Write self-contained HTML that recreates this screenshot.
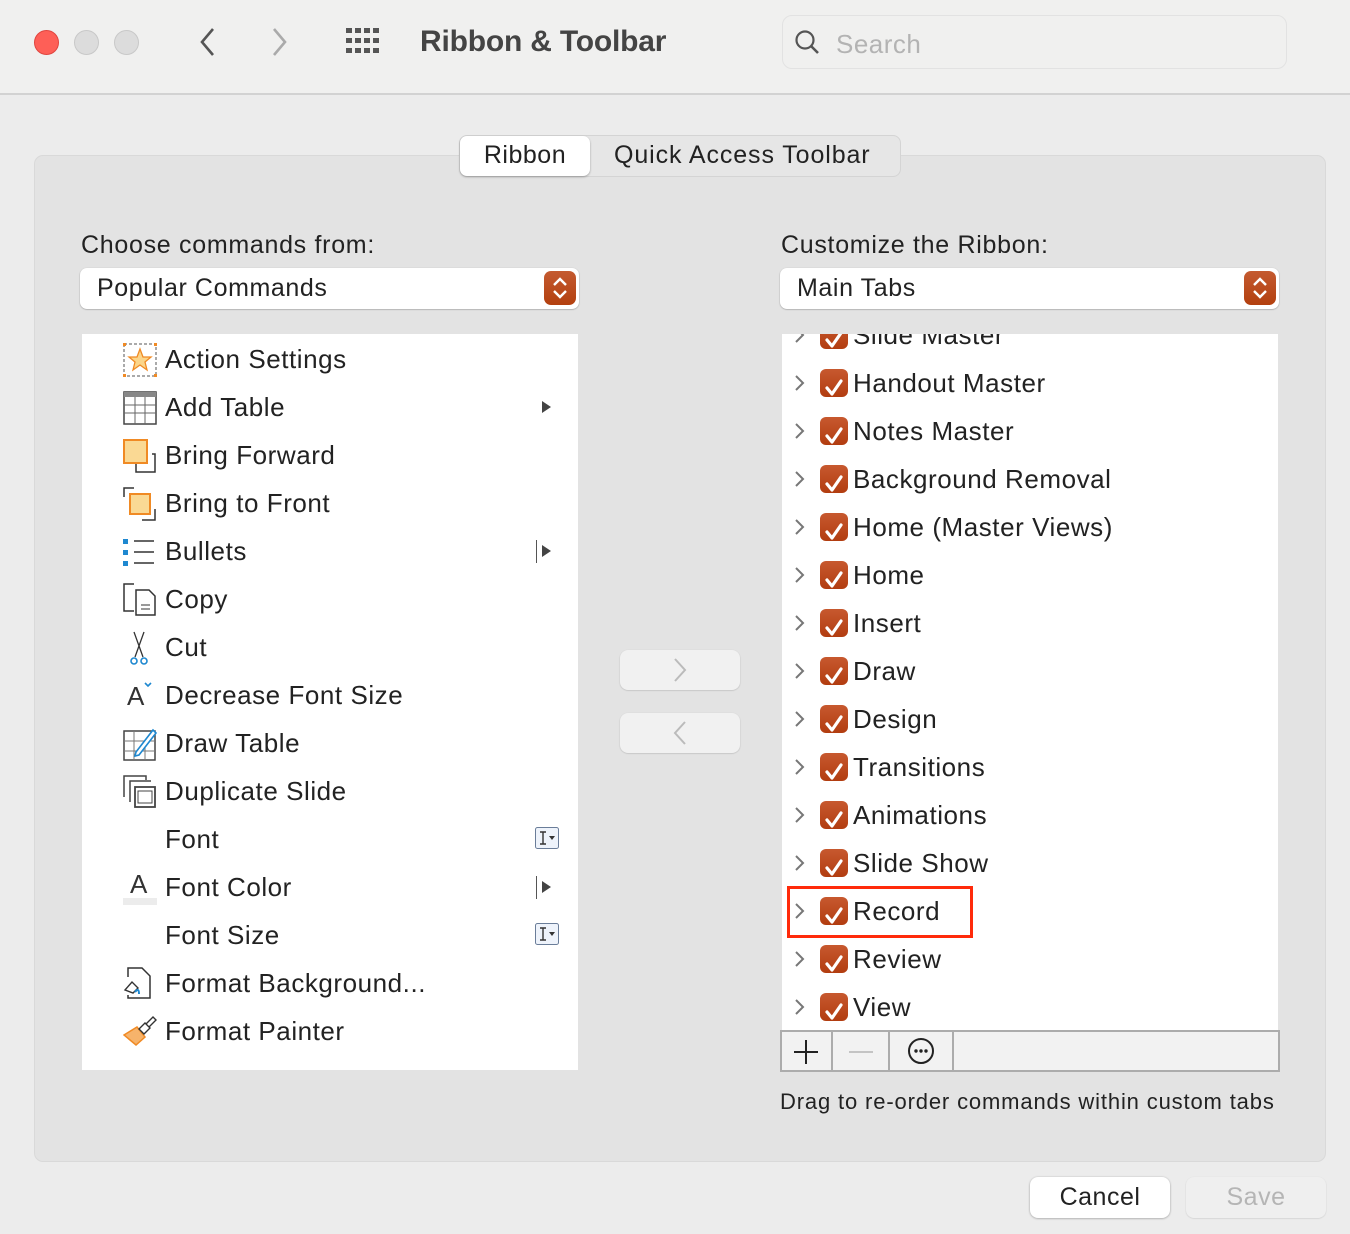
<!DOCTYPE html>
<html><head><meta charset="utf-8"><style>
*{box-sizing:border-box;margin:0;padding:0}
body{width:1350px;height:1234px;background:#ececec;font-family:"Liberation Sans",sans-serif;color:#222;position:relative;overflow:hidden}
.abs{position:absolute}
.hdr{left:0;top:0;width:1350px;height:95px;background:#f0f0ef;border-bottom:2px solid #d2d2d2}
.dot{width:25px;height:25px;border-radius:50%;top:30px}
.panel{left:34px;top:155px;width:1292px;height:1007px;background:#e3e3e3;border:1px solid #d9d9d9;border-radius:9px}
.lbl{font-size:25px;color:#222;letter-spacing:0.7px}
.dd{height:41px;background:#fff;border-radius:7px;box-shadow:0 0.5px 1.5px rgba(0,0,0,.35);font-size:25px;line-height:40px;padding-left:17px;letter-spacing:0.6px}
.step{position:absolute;right:3px;top:3px;width:32px;height:34px;border-radius:7px;background:linear-gradient(#c45a30,#b3400f)}
.list{background:#fff;overflow:hidden}
.row{position:absolute;left:0;height:48px;line-height:48px;font-size:26px;letter-spacing:0.55px;white-space:nowrap;width:100%}
.ic{position:absolute;left:41px;top:8px;width:34px;height:34px}
.row .t{position:absolute;left:83px}
.rrow .t{left:71px}
.chev{position:absolute;left:12px;top:15px}
.cb{position:absolute;left:38px;top:10px;width:28px;height:28px;border-radius:6px;background:linear-gradient(#c7592f,#b23d10)}
.btn{border-radius:8px;font-size:25px;text-align:center;line-height:40px;letter-spacing:0.5px}
</style></head><body>
<div class="abs hdr"></div>
<div class="abs dot" style="left:34px;background:#fe5f57;border:1px solid #e0443e"></div>
<div class="abs dot" style="left:74px;background:#dcdcdc;border:1px solid #c8c8c8"></div>
<div class="abs dot" style="left:114px;background:#dcdcdc;border:1px solid #c8c8c8"></div>
<svg class="abs" style="left:196px;top:26px" width="24" height="32"><path d="M17 3 L6 16 L17 29" fill="none" stroke="#555" stroke-width="2.6"/></svg>
<svg class="abs" style="left:268px;top:26px" width="24" height="32"><path d="M6 3 L17 16 L6 29" fill="none" stroke="#aaa" stroke-width="2.6"/></svg>
<svg class="abs" style="left:346px;top:28px" width="40" height="28">
<g fill="#555"><rect x="0" y="0" width="6" height="5"/><rect x="9" y="0" width="6" height="5"/><rect x="18" y="0" width="6" height="5"/><rect x="27" y="0" width="6" height="5"/>
<rect x="0" y="10" width="6" height="5"/><rect x="9" y="10" width="6" height="5"/><rect x="18" y="10" width="6" height="5"/><rect x="27" y="10" width="6" height="5"/>
<rect x="0" y="20" width="6" height="5"/><rect x="9" y="20" width="6" height="5"/><rect x="18" y="20" width="6" height="5"/><rect x="27" y="20" width="6" height="5"/></g></svg>
<div class="abs" style="left:420px;top:25px;font-size:30px;font-weight:bold;color:#444;letter-spacing:-0.2px">Ribbon &amp; Toolbar</div>
<div class="abs" style="left:782px;top:15px;width:505px;height:54px;border:1.5px solid #e2e2e2;border-radius:10px;background:#f0f0ef"></div>
<svg class="abs" style="left:794px;top:29px" width="28" height="28"><circle cx="11" cy="11" r="8.5" fill="none" stroke="#555" stroke-width="2.2"/><path d="M17 17 L24 24" stroke="#555" stroke-width="2.6"/></svg>
<div class="abs" style="left:836px;top:29px;font-size:26px;color:#b3b3b3;letter-spacing:0.5px">Search</div>

<div class="abs panel"></div>
<div class="abs" style="left:459px;top:135px;width:442px;height:42px;border-radius:8px;background:#e6e6e6;border:1px solid #d4d4d4"></div>
<div class="abs" style="left:460px;top:136px;width:130px;height:40px;border-radius:7px;background:#fff;box-shadow:0 1px 2px rgba(0,0,0,.3);font-size:25px;line-height:38px;text-align:center;letter-spacing:0.5px">Ribbon</div>
<div class="abs" style="left:614px;top:136px;font-size:25px;line-height:38px;letter-spacing:0.9px">Quick Access Toolbar</div>

<div class="abs lbl" style="left:81px;top:231px">Choose commands from:</div>
<div class="abs dd" style="left:80px;top:268px;width:499px">Popular Commands<div class="step"><svg width="32" height="34"><path d="M10 14 L16 8 L22 14 M10 20 L16 26 L22 20" fill="none" stroke="#fff" stroke-width="2.4"/></svg></div></div>
<div class="abs lbl" style="left:781px;top:231px">Customize the Ribbon:</div>
<div class="abs dd" style="left:780px;top:268px;width:499px">Main Tabs<div class="step"><svg width="32" height="34"><path d="M10 14 L16 8 L22 14 M10 20 L16 26 L22 20" fill="none" stroke="#fff" stroke-width="2.4"/></svg></div></div>

<div class="abs list" style="left:82px;top:334px;width:496px;height:736px">
<div class="row" style="top:1px"><svg class="ic" viewBox="0 0 34 34"><rect x="1" y="1" width="32" height="32" fill="none" stroke="#555" stroke-dasharray="3 2"/><g fill="#f08a24"><rect x="0" y="0" width="3" height="3"/><rect x="31" y="0" width="3" height="3"/><rect x="0" y="31" width="3" height="3"/><rect x="31" y="31" width="3" height="3"/></g><path d="M17 6 L20 14 L28 14 L22 19 L24 27 L17 22 L10 27 L12 19 L6 14 L14 14Z" fill="#fbd58a" stroke="#f08a24" stroke-width="1.3"/></svg><span class="t">Action Settings</span></div>
<div class="row" style="top:49px"><svg class="ic" viewBox="0 0 34 34"><rect x="1" y="1" width="32" height="32" fill="#fff" stroke="#444" stroke-width="1.5"/><rect x="1" y="1" width="32" height="5" fill="#888"/><path d="M1 14H33M1 22H33M12 6V33M22 6V33" stroke="#666"/></svg><span class="t">Add Table</span><svg class="abs" style="left:460px;top:18px" width="10" height="12"><path d="M0 0L9 6L0 12Z" fill="#444"/></svg></div>
<div class="row" style="top:97px"><svg class="ic" viewBox="0 0 34 34"><path d="M13 24V33H32V15H29" fill="none" stroke="#333" stroke-width="1.5"/><rect x="1" y="1" width="23" height="23" fill="#fad994" stroke="#f08a24" stroke-width="2"/></svg><span class="t">Bring Forward</span></div>
<div class="row" style="top:145px"><svg class="ic" viewBox="0 0 34 34"><path d="M1 10V1H11M19 33H32V22" fill="none" stroke="#333" stroke-width="1.5"/><rect x="7" y="7" width="20" height="20" fill="#fad994" stroke="#f08a24" stroke-width="2"/></svg><span class="t">Bring to Front</span></div>
<div class="row" style="top:193px"><svg class="ic" viewBox="0 0 34 34"><g fill="#1e88d0"><rect x="0" y="4" width="5" height="5"/><rect x="0" y="15" width="5" height="5"/><rect x="0" y="26" width="5" height="5"/></g><path d="M11 6H31M11 17H31M11 28H31" stroke="#333" stroke-width="1.5"/></svg><span class="t">Bullets</span><div class="abs" style="left:454px;top:13px;width:1px;height:23px;background:#555"></div><svg class="abs" style="left:460px;top:18px" width="10" height="12"><path d="M0 0L9 6L0 12Z" fill="#444"/></svg></div>
<div class="row" style="top:241px"><svg class="ic" viewBox="0 0 34 34"><path d="M11 28H1V1H11" fill="none" stroke="#333" stroke-width="1.5"/><path d="M13 7H26L32 13V32H13Z" fill="#fff" stroke="#333" stroke-width="1.5"/><path d="M18 22H27M18 26H27" stroke="#333"/></svg><span class="t">Copy</span></div>
<div class="row" style="top:289px"><svg class="ic" viewBox="0 0 34 34"><path d="M11 1L20 26M21 1L12 26" stroke="#333" stroke-width="1.3"/><circle cx="11" cy="30" r="3" fill="none" stroke="#1e88d0" stroke-width="1.6"/><circle cx="21" cy="30" r="3" fill="none" stroke="#1e88d0" stroke-width="1.6"/></svg><span class="t">Cut</span></div>
<div class="row" style="top:337px"><svg class="ic" viewBox="0 0 34 34"><text x="4" y="26" font-size="26" fill="#333" font-family="Liberation Sans">A</text><path d="M22 4L25 7L28 4" fill="none" stroke="#1e88d0" stroke-width="1.6"/></svg><span class="t">Decrease Font Size</span></div>
<div class="row" style="top:385px"><svg class="ic" viewBox="0 0 34 34"><rect x="1" y="4" width="31" height="29" fill="#fff" stroke="#444" stroke-width="1.5"/><path d="M1 14H32M1 24H32M11 4V33M22 14V33" stroke="#777"/><path d="M13 25L30 3L33 6L16 28L12 29Z" fill="#fff" stroke="#1e88d0" stroke-width="1.6"/></svg><span class="t">Draw Table</span></div>
<div class="row" style="top:433px"><svg class="ic" viewBox="0 0 34 34"><path d="M1 22V1H23V5" fill="none" stroke="#444" stroke-width="1.5"/><path d="M7 27V6H28" fill="none" stroke="#444" stroke-width="1.5"/><rect x="12" y="12" width="20" height="20" fill="#fff" stroke="#444" stroke-width="1.8"/><rect x="15" y="16" width="14" height="12" fill="none" stroke="#444"/></svg><span class="t">Duplicate Slide</span></div>
<div class="row" style="top:481px"><span class="t">Font</span><svg class="abs" style="left:453px;top:12px" width="24" height="22"><rect x="0.5" y="0.5" width="23" height="21" rx="2" fill="#eef3fb" stroke="#6a7d99"/><path d="M5 5H11M5 17H11M8 5V17" stroke="#333" stroke-width="1.4"/><path d="M14 9H20L17 13Z" fill="#333"/></svg></div>
<div class="row" style="top:529px"><svg class="ic" viewBox="0 0 34 34"><text x="7" y="22" font-size="26" fill="#333" font-family="Liberation Sans">A</text><rect x="0" y="27" width="34" height="7" fill="#ececec"/></svg><span class="t">Font Color</span><div class="abs" style="left:454px;top:13px;width:1px;height:23px;background:#555"></div><svg class="abs" style="left:460px;top:18px" width="10" height="12"><path d="M0 0L9 6L0 12Z" fill="#444"/></svg></div>
<div class="row" style="top:577px"><span class="t">Font Size</span><svg class="abs" style="left:453px;top:12px" width="24" height="22"><rect x="0.5" y="0.5" width="23" height="21" rx="2" fill="#eef3fb" stroke="#6a7d99"/><path d="M5 5H11M5 17H11M8 5V17" stroke="#333" stroke-width="1.4"/><path d="M14 9H20L17 13Z" fill="#333"/></svg></div>
<div class="row" style="top:625px"><svg class="ic" viewBox="0 0 34 34"><path d="M5 10V1H19L27 9V31H5V28" fill="#fff" stroke="#333" stroke-width="1.5"/><path d="M2 23L9 15L15 21L10 26Z" fill="#fff" stroke="#333" stroke-width="1.4"/><path d="M12 25Q16 20 16 27" stroke="#1e88d0" stroke-width="2" fill="none"/></svg><span class="t">Format Background...</span></div>
<div class="row" style="top:673px"><svg class="ic" viewBox="0 0 34 34"><path d="M1 20L14 12L22 22L13 30Z" fill="#f6b36b" stroke="#f08a24" stroke-width="1.5"/><path d="M16 14L22 8L27 13L21 19Z" fill="#fff" stroke="#333" stroke-width="1.4"/><path d="M23 9L30 2L33 5L26 12" fill="none" stroke="#333" stroke-width="1.4"/></svg><span class="t">Format Painter</span></div>
<div class="row" style="top:721px"><span class="t">Format Paste</span></div>
</div>

<div class="abs btn" style="left:620px;top:650px;width:120px;height:40px;background:#f1f1f1;box-shadow:0 0.5px 1.5px rgba(0,0,0,.2)"><svg width="20" height="28" style="margin-top:6px"><path d="M5 3L15 14L5 25" fill="none" stroke="#bbb" stroke-width="2"/></svg></div>
<div class="abs btn" style="left:620px;top:713px;width:120px;height:40px;background:#f1f1f1;box-shadow:0 0.5px 1.5px rgba(0,0,0,.2)"><svg width="20" height="28" style="margin-top:6px"><path d="M15 3L5 14L15 25" fill="none" stroke="#bbb" stroke-width="2"/></svg></div>

<div class="abs list" style="left:782px;top:334px;width:496px;height:697px">
<div class="row rrow" style="top:-23px"><svg class="chev" width="12" height="18"><path d="M2 2L9 9L2 16" fill="none" stroke="#777" stroke-width="2"/></svg><div class="cb"><svg width="28" height="28"><path d="M7 14L12 20L21 7" fill="none" stroke="#fff" stroke-width="3.2" stroke-linecap="round" stroke-linejoin="round"/></svg></div><span class="t">Slide Master</span></div>
<div class="row rrow" style="top:25px"><svg class="chev" width="12" height="18"><path d="M2 2L9 9L2 16" fill="none" stroke="#777" stroke-width="2"/></svg><div class="cb"><svg width="28" height="28"><path d="M7 14L12 20L21 7" fill="none" stroke="#fff" stroke-width="3.2" stroke-linecap="round" stroke-linejoin="round"/></svg></div><span class="t">Handout Master</span></div>
<div class="row rrow" style="top:73px"><svg class="chev" width="12" height="18"><path d="M2 2L9 9L2 16" fill="none" stroke="#777" stroke-width="2"/></svg><div class="cb"><svg width="28" height="28"><path d="M7 14L12 20L21 7" fill="none" stroke="#fff" stroke-width="3.2" stroke-linecap="round" stroke-linejoin="round"/></svg></div><span class="t">Notes Master</span></div>
<div class="row rrow" style="top:121px"><svg class="chev" width="12" height="18"><path d="M2 2L9 9L2 16" fill="none" stroke="#777" stroke-width="2"/></svg><div class="cb"><svg width="28" height="28"><path d="M7 14L12 20L21 7" fill="none" stroke="#fff" stroke-width="3.2" stroke-linecap="round" stroke-linejoin="round"/></svg></div><span class="t">Background Removal</span></div>
<div class="row rrow" style="top:169px"><svg class="chev" width="12" height="18"><path d="M2 2L9 9L2 16" fill="none" stroke="#777" stroke-width="2"/></svg><div class="cb"><svg width="28" height="28"><path d="M7 14L12 20L21 7" fill="none" stroke="#fff" stroke-width="3.2" stroke-linecap="round" stroke-linejoin="round"/></svg></div><span class="t">Home (Master Views)</span></div>
<div class="row rrow" style="top:217px"><svg class="chev" width="12" height="18"><path d="M2 2L9 9L2 16" fill="none" stroke="#777" stroke-width="2"/></svg><div class="cb"><svg width="28" height="28"><path d="M7 14L12 20L21 7" fill="none" stroke="#fff" stroke-width="3.2" stroke-linecap="round" stroke-linejoin="round"/></svg></div><span class="t">Home</span></div>
<div class="row rrow" style="top:265px"><svg class="chev" width="12" height="18"><path d="M2 2L9 9L2 16" fill="none" stroke="#777" stroke-width="2"/></svg><div class="cb"><svg width="28" height="28"><path d="M7 14L12 20L21 7" fill="none" stroke="#fff" stroke-width="3.2" stroke-linecap="round" stroke-linejoin="round"/></svg></div><span class="t">Insert</span></div>
<div class="row rrow" style="top:313px"><svg class="chev" width="12" height="18"><path d="M2 2L9 9L2 16" fill="none" stroke="#777" stroke-width="2"/></svg><div class="cb"><svg width="28" height="28"><path d="M7 14L12 20L21 7" fill="none" stroke="#fff" stroke-width="3.2" stroke-linecap="round" stroke-linejoin="round"/></svg></div><span class="t">Draw</span></div>
<div class="row rrow" style="top:361px"><svg class="chev" width="12" height="18"><path d="M2 2L9 9L2 16" fill="none" stroke="#777" stroke-width="2"/></svg><div class="cb"><svg width="28" height="28"><path d="M7 14L12 20L21 7" fill="none" stroke="#fff" stroke-width="3.2" stroke-linecap="round" stroke-linejoin="round"/></svg></div><span class="t">Design</span></div>
<div class="row rrow" style="top:409px"><svg class="chev" width="12" height="18"><path d="M2 2L9 9L2 16" fill="none" stroke="#777" stroke-width="2"/></svg><div class="cb"><svg width="28" height="28"><path d="M7 14L12 20L21 7" fill="none" stroke="#fff" stroke-width="3.2" stroke-linecap="round" stroke-linejoin="round"/></svg></div><span class="t">Transitions</span></div>
<div class="row rrow" style="top:457px"><svg class="chev" width="12" height="18"><path d="M2 2L9 9L2 16" fill="none" stroke="#777" stroke-width="2"/></svg><div class="cb"><svg width="28" height="28"><path d="M7 14L12 20L21 7" fill="none" stroke="#fff" stroke-width="3.2" stroke-linecap="round" stroke-linejoin="round"/></svg></div><span class="t">Animations</span></div>
<div class="row rrow" style="top:505px"><svg class="chev" width="12" height="18"><path d="M2 2L9 9L2 16" fill="none" stroke="#777" stroke-width="2"/></svg><div class="cb"><svg width="28" height="28"><path d="M7 14L12 20L21 7" fill="none" stroke="#fff" stroke-width="3.2" stroke-linecap="round" stroke-linejoin="round"/></svg></div><span class="t">Slide Show</span></div>
<div class="row rrow" style="top:553px"><svg class="chev" width="12" height="18"><path d="M2 2L9 9L2 16" fill="none" stroke="#777" stroke-width="2"/></svg><div class="cb"><svg width="28" height="28"><path d="M7 14L12 20L21 7" fill="none" stroke="#fff" stroke-width="3.2" stroke-linecap="round" stroke-linejoin="round"/></svg></div><span class="t">Record</span></div>
<div class="row rrow" style="top:601px"><svg class="chev" width="12" height="18"><path d="M2 2L9 9L2 16" fill="none" stroke="#777" stroke-width="2"/></svg><div class="cb"><svg width="28" height="28"><path d="M7 14L12 20L21 7" fill="none" stroke="#fff" stroke-width="3.2" stroke-linecap="round" stroke-linejoin="round"/></svg></div><span class="t">Review</span></div>
<div class="row rrow" style="top:649px"><svg class="chev" width="12" height="18"><path d="M2 2L9 9L2 16" fill="none" stroke="#777" stroke-width="2"/></svg><div class="cb"><svg width="28" height="28"><path d="M7 14L12 20L21 7" fill="none" stroke="#fff" stroke-width="3.2" stroke-linecap="round" stroke-linejoin="round"/></svg></div><span class="t">View</span></div>
</div>
<div class="abs" style="left:787px;top:886px;width:186px;height:52px;border:3px solid #ff2a0a"></div>

<div class="abs" style="left:780px;top:1030px;width:500px;height:42px;border:2px solid #acacac;background:#f2f2f2"></div>
<div class="abs" style="left:831px;top:1031px;width:2px;height:40px;background:#acacac"></div>
<div class="abs" style="left:888px;top:1031px;width:2px;height:40px;background:#acacac"></div>
<div class="abs" style="left:952px;top:1031px;width:2px;height:40px;background:#acacac"></div>
<svg class="abs" style="left:793px;top:1039px" width="26" height="26"><path d="M13 1V25M1 13H25" stroke="#222" stroke-width="2"/></svg>
<svg class="abs" style="left:848px;top:1039px" width="26" height="26"><path d="M1 13H25" stroke="#c4c4c4" stroke-width="2"/></svg>
<svg class="abs" style="left:907px;top:1037px" width="28" height="28"><circle cx="14" cy="14" r="12" fill="none" stroke="#222" stroke-width="2"/><circle cx="9" cy="14" r="1.7" fill="#222"/><circle cx="14" cy="14" r="1.7" fill="#222"/><circle cx="19" cy="14" r="1.7" fill="#222"/></svg>
<div class="abs" style="left:780px;top:1089px;font-size:22px;color:#222;letter-spacing:0.85px">Drag to re-order commands within custom tabs</div>

<div class="abs btn" style="left:1030px;top:1177px;width:140px;height:41px;background:#fff;box-shadow:0 0.5px 2px rgba(0,0,0,.35)">Cancel</div>
<div class="abs btn" style="left:1186px;top:1177px;width:140px;height:41px;background:#efefef;color:#b5b5b5;box-shadow:0 0.5px 1.5px rgba(0,0,0,.15)">Save</div>
</body></html>
